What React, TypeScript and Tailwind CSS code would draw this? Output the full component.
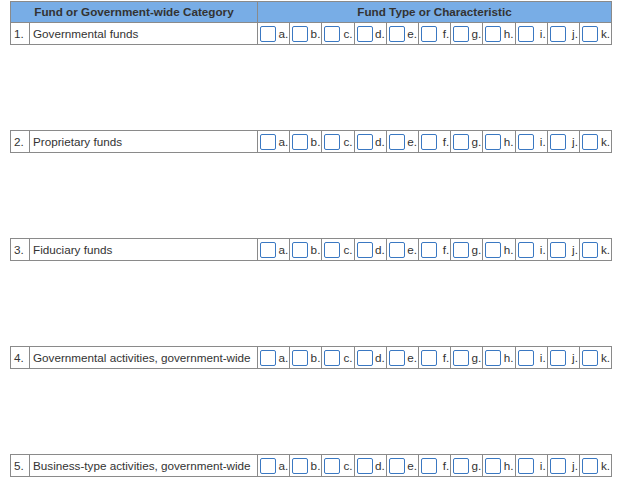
import React from 'react'

const letters = ['a', 'b', 'c', 'd', 'e', 'f', 'g', 'h', 'i', 'j', 'k']

const categories = [
  'Governmental funds',
  'Proprietary funds',
  'Fiduciary funds',
  'Governmental activities, government-wide',
  'Business-type activities, government-wide',
]

function OptionCell({ letter, last }: { letter: string; last: boolean }) {
  return (
    <div className={`flex flex-1 items-center pl-[2px] ${last ? '' : 'border-r border-[#8a8a8a]'}`}>
      <span className="h-4 w-4 shrink-0 rounded-[2px] border border-[#3a78c2] bg-white" />
      <span className="ml-auto pr-[1px]">{letter}.</span>
    </div>
  )
}

function CategoryRow({ index, label }: { index: number; label: string }) {
  return (
    <div
      className={`flex h-[23px] border border-[#8a8a8a] ${index === 0 ? '-mt-px' : 'mt-[85px]'}`}
    >
      <div className="flex w-[19px] items-center border-r border-[#8a8a8a] pl-[3px]">{index + 1}.</div>
      <div className="flex w-[228px] items-center border-r border-[#8a8a8a] pl-[3px]">{label}</div>
      <div className="flex flex-1">
        {letters.map((l, i) => (
          <OptionCell key={l} letter={l} last={i === letters.length - 1} />
        ))}
      </div>
    </div>
  )
}

export default function App() {
  return (
    <div
      className="min-h-[490px] w-[622px] bg-white pl-[10px] pt-px text-[11.7px] text-[#333]"
      style={{ fontFamily: '"Liberation Sans", Arial, sans-serif' }}
    >
      <div className="w-[602px]">
        <div className="flex h-[22px] border border-[#8a8a8a] bg-[#78ade6] font-bold">
          <div className="flex w-[247px] items-center justify-center border-r border-[#8a8a8a]">
            Fund or Government-wide Category
          </div>
          <div className="flex flex-1 items-center justify-center">Fund Type or Characteristic</div>
        </div>
        {categories.map((c, i) => (
          <CategoryRow key={c} index={i} label={c} />
        ))}
      </div>
    </div>
  )
}
